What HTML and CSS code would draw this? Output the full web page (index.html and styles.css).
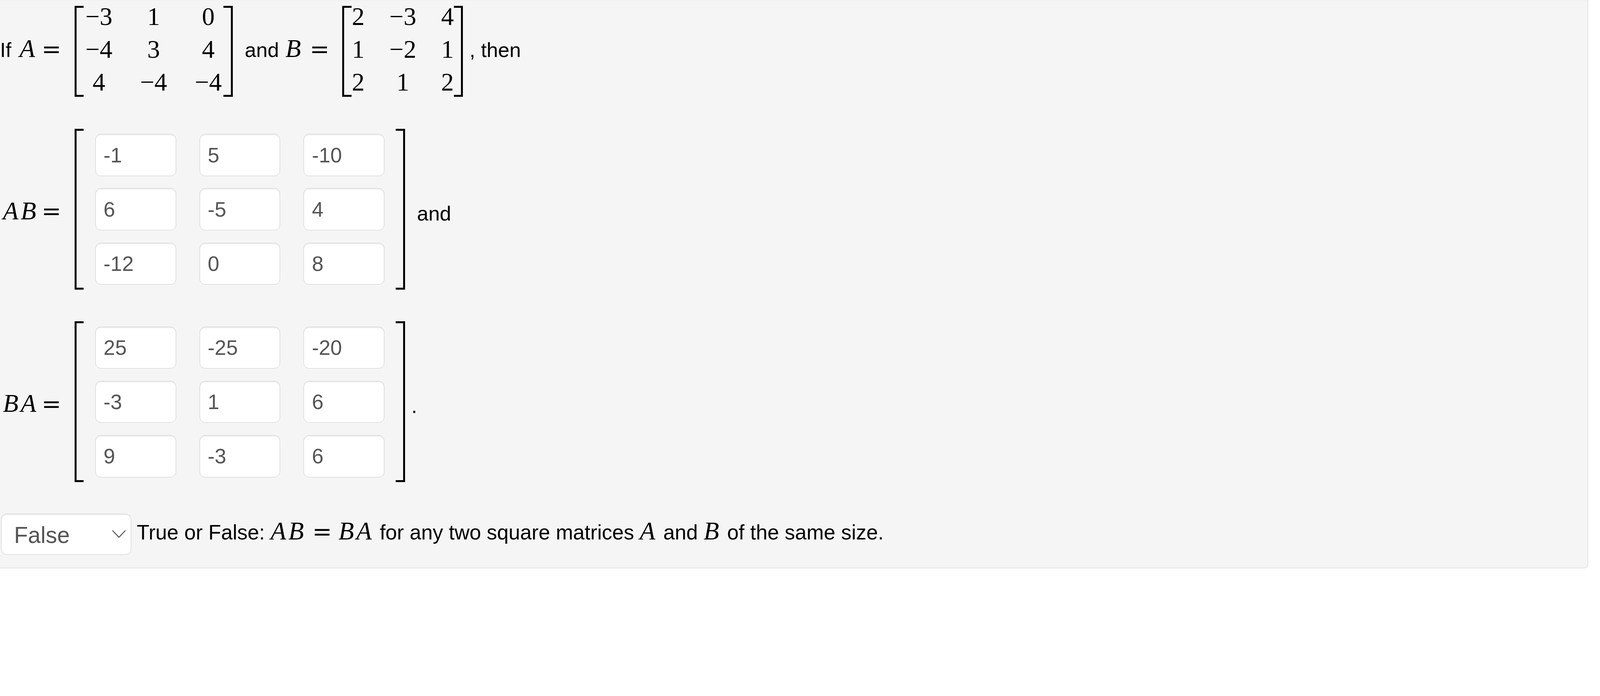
FILE: index.html
```html
<!DOCTYPE html>
<html lang="en">
<head>
<meta charset="utf-8">
<title>Matrix products</title>
<link rel="stylesheet" href="styles.css">
</head>
<body>
<div class="well">
  <div class="line line-def">
    <span class="lhs">
      <span class="txt">If</span>
      <span class="mi mi-a1">A</span>
      <span class="mo">=</span>
    </span>
    <span class="mat">
      <span class="br br-l"></span>
      <span class="grid-num grid-a">
        <span>−3</span><span>1</span><span>0</span>
        <span>−4</span><span>3</span><span>4</span>
        <span>4</span><span>−4</span><span>−4</span>
      </span>
      <span class="br br-r"></span>
    </span>
    <span class="txt txt-and">and</span>
    <span class="mi mi-b">B</span>
    <span class="mo mo-b">=</span>
    <span class="mat">
      <span class="br br-l"></span>
      <span class="grid-num grid-b">
        <span>2</span><span>−3</span><span>4</span>
        <span>1</span><span>−2</span><span>1</span>
        <span>2</span><span>1</span><span>2</span>
      </span>
      <span class="br br-r"></span>
    </span>
    <span class="txt txt-then">, then</span>
  </div>

  <div class="line line-mat line-ab">
    <span class="lhs">
      <span class="mi mi-lead">AB</span>
      <span class="mo">=</span>
    </span>
    <span class="mat">
      <span class="br br-l"></span>
      <span class="grid-in">
        <input class="ans" type="text" value="-1" readonly>
        <input class="ans" type="text" value="5" readonly>
        <input class="ans" type="text" value="-10" readonly>
        <input class="ans" type="text" value="6" readonly>
        <input class="ans" type="text" value="-5" readonly>
        <input class="ans" type="text" value="4" readonly>
        <input class="ans" type="text" value="-12" readonly>
        <input class="ans" type="text" value="0" readonly>
        <input class="ans" type="text" value="8" readonly>
      </span>
      <span class="br br-r"></span>
    </span>
    <span class="txt txt-tail">and</span>
  </div>

  <div class="line line-mat line-ba">
    <span class="lhs">
      <span class="mi mi-lead">BA</span>
      <span class="mo">=</span>
    </span>
    <span class="mat">
      <span class="br br-l"></span>
      <span class="grid-in">
        <input class="ans" type="text" value="25" readonly>
        <input class="ans" type="text" value="-25" readonly>
        <input class="ans" type="text" value="-20" readonly>
        <input class="ans" type="text" value="-3" readonly>
        <input class="ans" type="text" value="1" readonly>
        <input class="ans" type="text" value="6" readonly>
        <input class="ans" type="text" value="9" readonly>
        <input class="ans" type="text" value="-3" readonly>
        <input class="ans" type="text" value="6" readonly>
      </span>
      <span class="br br-r"></span>
    </span>
    <span class="txt txt-dot">.</span>
  </div>

  <div class="line line-tf">
    <div class="select">
      <span class="select-val">False</span>
      <svg class="chev" width="35" height="21" viewBox="0 0 42 25" aria-hidden="true">
        <polyline points="2,2 21,22 40,2" fill="none" stroke="#555" stroke-width="3" stroke-linecap="round" stroke-linejoin="round"/>
      </svg>
    </div>
    <p class="q">True or False: <span class="m">AB</span><span class="rel">=</span><span class="m">BA</span> for any two square matrices <span class="m">A</span> and <span class="m">B</span> of the same size.</p>
  </div>
</div>
</body>
</html>
```

FILE: styles.css
```css
* {
  box-sizing: border-box;
}

html,
body {
  margin: 0;
  padding: 0;
  background: #fff;
}

body {
  font-family: "Liberation Sans", Arial, Helvetica, sans-serif;
  color: #000;
}

.well {
  width: calc(100% - 30px);
  height: 1456px;
  overflow: hidden;
  background: #f5f5f5;
  border-right: 2.5px solid #e3e3e3;
  border-bottom: 2.5px solid #e3e3e3;
  border-bottom-right-radius: 11px;
  box-shadow: inset 0 2px 2px rgba(0, 0, 0, 0.02);
  display: flex;
  flex-direction: column;
}

.line {
  display: flex;
  align-items: center;
  flex: none;
}

.line-def {
  height: 252.5px;
}

.line-ab {
  margin-top: 77.5px;
}

.line-ba {
  margin-top: 81.7px;
}

.line-tf {
  margin-top: 80.8px;
}

/* text and math tokens */
.txt {
  font-size: 52.5px;
  line-height: 1;
  white-space: pre;
  flex: none;
}

.mi {
  font-family: "Liberation Serif", "Times New Roman", serif;
  font-style: italic;
  font-size: 65px;
  line-height: 1;
  letter-spacing: 5.8px;
  flex: none;
}

.mo {
  font-family: "DejaVu Serif", serif;
  font-size: 60px;
  line-height: 1;
  width: 50px;
  text-align: center;
  flex: none;
}

.lhs {
  display: flex;
  align-items: center;
  width: 190.8px;
  flex: none;
}

.lhs .mo {
  margin-left: auto;
  margin-right: 34.2px;
}

.mi-a1 {
  margin-left: 20.8px;
}

.mi-lead {
  margin-left: 7.5px;
}

.txt-and {
  margin-left: 30.8px;
}

.mi-b {
  margin-left: 16.7px;
}

.mo-b {
  margin-left: 16.7px;
  margin-right: 33.3px;
}

.txt-then {
  margin-left: 16.7px;
}

.txt-tail {
  margin-left: 30.8px;
}

.txt-dot {
  margin-left: 16.7px;
}

/* vertical tuning of baselines */
.line-def .txt {
  padding-top: 4.2px;
}

.line-def .mi,
.line-def .mo {
  padding-bottom: 3.3px;
}

.line-mat .mi,
.line-mat .mo {
  padding-top: 9.2px;
}

.line-mat .txt {
  padding-top: 22.5px;
}

/* matrices */
.mat {
  display: flex;
  align-items: stretch;
  flex: none;
}

.br {
  width: 23.3px;
  border: 5.8px solid #000;
  flex: none;
}

.br-l {
  border-right: 0;
}

.br-r {
  border-left: 0;
}

.line-def .br {
  align-self: flex-start;
  margin-top: 15px;
  height: 233.3px;
}

.grid-num {
  display: grid;
  grid-template-rows: repeat(3, 84.2px);
  font-family: "Liberation Serif", "Times New Roman", serif;
  font-size: 65px;
  line-height: 84.2px;
  text-align: center;
  white-space: nowrap;
}

.grid-a {
  grid-template-columns: repeat(3, 75px);
  column-gap: 65px;
  margin: 0 1.7px;
}

.grid-b {
  grid-template-columns: 33.3px 75px 33.3px;
  column-gap: 60px;
  margin: 0 0 0 0.8px;
}

.grid-in {
  display: grid;
  grid-template-columns: repeat(3, 206.7px);
  grid-template-rows: repeat(3, 107.5px);
  gap: 31.7px 60px;
  padding: 13.3px 0 12.5px;
  margin: 0 29.2px 0 30px;
}

.ans {
  width: 206.7px;
  height: 107.5px;
  margin: 0;
  padding: 0 20px;
  border: 1.67px solid #ccc;
  border-radius: 14.2px;
  background: #fff;
  box-shadow: inset 0 2.5px 2.5px rgba(0, 0, 0, 0.075);
  font-family: "Liberation Sans", Arial, Helvetica, sans-serif;
  font-size: 53.3px;
  color: #555;
  outline: none;
}

/* true / false line */
.select {
  margin-left: 2.5px;
  width: 333.3px;
  height: 105px;
  border: 1.67px solid #ccc;
  border-radius: 14.2px;
  background: #fff;
  box-shadow: inset 0 2.5px 2.5px rgba(0, 0, 0, 0.075);
  display: flex;
  align-items: center;
  justify-content: space-between;
  padding: 0 13.3px 0 32.5px;
  flex: none;
}

.select-val {
  font-size: 58.3px;
  line-height: 1;
  color: #555;
  padding-top: 5px;
}

.chev {
  display: block;
  flex: none;
}

.q {
  margin: 0 0 0 14.2px;
  font-size: 53px;
  line-height: 1;
  padding-bottom: 10px;
  white-space: nowrap;
}

.q .m {
  font-family: "Liberation Serif", "Times New Roman", serif;
  font-style: italic;
  font-size: 65px;
  line-height: 0;
  letter-spacing: 5.8px;
}

.q .rel {
  font-family: "DejaVu Serif", serif;
  font-size: 60px;
  line-height: 0;
  margin: 0 16.7px 0 15.8px;
}
```
